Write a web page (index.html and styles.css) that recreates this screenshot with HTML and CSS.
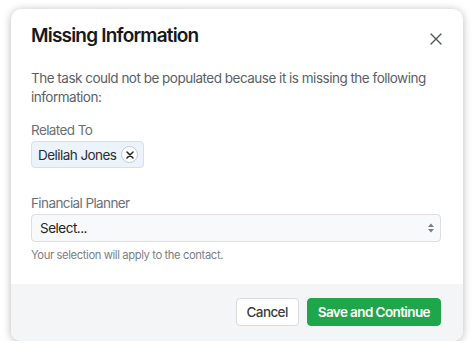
FILE: index.html
```html
<!DOCTYPE html>
<html lang="en">
<head>
  <meta charset="UTF-8"/>
  <meta name="viewport" content="width=device-width, initial-scale=1.0"/>
  <title>Missing Information</title>
  <link rel="stylesheet" href="styles.css">
</head>
<body>
<div class="modal">
  <div class="modal_head">
    <h1 class="modal_title">Missing Information</h1>
    <button class="close_btn" aria-label="Close">
      <svg width="12" height="12" viewBox="0 0 12 12"><path d="M1 1L11 11M11 1L1 11" stroke="#50555c" stroke-width="1.4" stroke-linecap="round"/></svg>
    </button>
  </div>
  <div class="modal_body">
    <p class="intro">The task could not be populated because it is missing the following information:</p>

    <div class="field_label">Related To</div>
    <div class="chip">
      <span class="chip_text">Delilah Jones</span>
      <span class="chip_remove">
        <svg width="8" height="8" viewBox="0 0 8 8"><path d="M1 1L7 7M7 1L1 7" stroke="#222" stroke-width="1.5" stroke-linecap="round"/></svg>
      </span>
    </div>

    <div class="field_label field_label_2">Financial Planner</div>
    <div class="select">
      <span>Select...</span>
      <svg width="8" height="12" viewBox="0 0 8 12"><path d="M4 1.5L7 5H1Z M4 10.5L7 7H1Z" fill="#7a7f87"/></svg>
    </div>
    <div class="help">Your selection will apply to the contact.</div>
  </div>
  <div class="modal_foot">
    <button class="btn btn_cancel">Cancel</button>
    <button class="btn btn_save">Save and Continue</button>
  </div>
</div>
</body>
</html>
```

FILE: styles.css
```css
body {
    margin: 0;
    padding: 9px 0 0 11px;
    background: #fff;
    font-family: Inter, "Liberation Sans", sans-serif;
}

.modal {
    width: 452px;
    background: #fff;
    border-radius: 10px;
    box-shadow: 0 1px 8px rgba(0, 0, 0, 0.28);
    overflow: hidden;
}

.modal_head {
    display: flex;
    justify-content: space-between;
    align-items: flex-start;
    padding: 15px 21px 0 20px;
}

.modal_title {
    margin: 0;
    font-size: 19px;
    line-height: 24px;
    font-weight: 600;
    letter-spacing: -0.8px;
    color: #16181b;
}

.close_btn {
    border: 0;
    background: none;
    padding: 0;
    margin-top: 9px;
    width: 12px;
    height: 12px;
    display: flex;
}

.modal_body {
    padding: 21px 22px 21px 20px;
}

.intro {
    margin: 0;
    font-size: 13.5px;
    line-height: 19px;
    letter-spacing: -0.5px;
    color: #5b6068;
}

.field_label {
    margin-top: 13px;
    font-size: 13.5px;
    line-height: 20px;
    letter-spacing: -0.6px;
    color: #6b7078;
}

.field_label_2 {
    margin-top: 25px;
}

.chip {
    display: inline-flex;
    align-items: center;
    gap: 5px;
    margin-top: 1px;
    height: 27px;
    padding: 0 5px 0 6px;
    box-sizing: border-box;
    background: #edf3fa;
    border: 1px solid #d3e0ee;
    border-radius: 4px;
}

.chip_text {
    font-size: 13.5px;
    letter-spacing: -0.55px;
    color: #2a2d32;
}

.chip_remove {
    width: 17px;
    height: 17px;
    box-sizing: border-box;
    border: 1px solid #c3c8cf;
    border-radius: 50%;
    background: #fff;
    display: flex;
    align-items: center;
    justify-content: center;
}

.select {
    margin-top: 1px;
    height: 28px;
    box-sizing: border-box;
    display: flex;
    align-items: center;
    justify-content: space-between;
    padding: 0 5px 0 8px;
    background: #f8f9fa;
    border: 1px solid #dcdfe3;
    border-radius: 4px;
    font-size: 13.5px;
    letter-spacing: -0.5px;
    color: #22252a;
}

.help {
    margin-top: 5px;
    font-size: 11.25px;
    line-height: 16px;
    letter-spacing: -0.4px;
    color: #7a7f87;
}

.modal_foot {
    display: flex;
    justify-content: flex-end;
    gap: 8px;
    padding: 14px 22px 15px;
    background: #f4f5f7;
}

.btn {
    height: 28px;
    border-radius: 4px;
    font-family: inherit;
    font-size: 13.5px;
    font-weight: 500;
    letter-spacing: -0.6px;
    padding: 0 10px;
    cursor: pointer;
}

.btn_cancel {
    background: #fff;
    border: 1px solid #d8dbe0;
    color: #3a3d42;
}

.btn_save {
    background: #1fa64a;
    border: 1px solid #1fa64a;
    color: #fff;
    font-weight: 600;
}
```
